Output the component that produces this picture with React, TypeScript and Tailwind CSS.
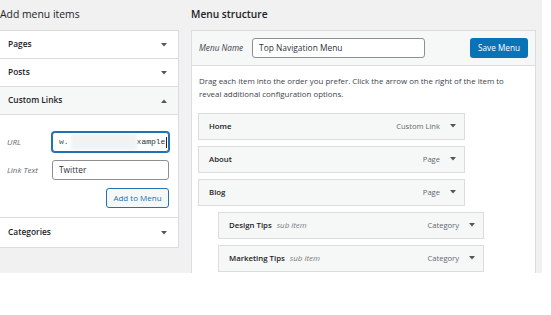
import React from 'react';

const font = { fontFamily: '"Open Sans", "Noto Sans", sans-serif' };

function Arrow({ up = false }: { up?: boolean }) {
  return (
    <svg width="6" height="4" viewBox="0 0 6 4" className="shrink-0">
      {up ? <path d="M0 4 L3 0.5 L6 4 Z" fill="#50575e" /> : <path d="M0 0 L6 0 L3 3.5 Z" fill="#50575e" />}
    </svg>
  );
}

function AccordionRow({ label, open = false }: { label: string; open?: boolean }) {
  return (
    <div
      className={`flex h-[28px] items-center justify-between border-b border-[#dcdcde] pl-[8px] pr-[11px] ${
        open ? 'bg-[#f6f7f7]' : 'bg-white'
      }`}
    >
      <span className="text-[8.4px] font-semibold text-[#1d2327]">{label}</span>
      <Arrow up={open} />
    </div>
  );
}

function MenuItem({ title, type, sub = false }: { title: string; type: string; sub?: boolean }) {
  return (
    <div
      className={`flex h-[27px] items-center justify-between border border-[#dcdcde] bg-[#f6f7f7] pl-[10px] pr-[8px] ${
        sub ? 'ml-[20px] w-[266px]' : 'w-[267px]'
      }`}
    >
      <div className="flex items-baseline gap-[5px]">
        <span className="text-[7.8px] font-semibold text-[#1d2327]">{title}</span>
        {sub && <span className="text-[7.9px] italic text-[#787c82]">sub item</span>}
      </div>
      <div className="flex items-center gap-[10px]">
        <span className="text-[7.6px] text-[#646970]">{type}</span>
        <Arrow />
      </div>
    </div>
  );
}

export default function App() {
  return (
    <div className="h-[315px] w-[551px] overflow-hidden bg-white" style={font}>
      <div className="flex h-[273px] w-[542px] gap-[12px] bg-[#f1f1f1]">
        {/* left column */}
        <div className="flex w-[179px] shrink-0 flex-col">
          <h2 className="flex h-[30px] items-center pb-[1px] text-[10.4px] text-[#1d2327]">Add menu items</h2>
          <div className="border-y border-r border-[#dcdcde] bg-white">
            <AccordionRow label="Pages" />
            <AccordionRow label="Posts" />
            <AccordionRow label="Custom Links" open />
            <div className="flex flex-col gap-[8px] border-b border-[#dcdcde] pb-[9px] pl-[7px] pr-[9px] pt-[17px]">
              <div className="flex items-center justify-between">
                <span className="text-[8px] italic text-[#646970]">URL</span>
                <div className="flex h-[20px] w-[117px] items-center overflow-hidden rounded-[3px] border border-[#2271b1] bg-white pl-[6px] shadow-[0_0_0_1px_#2271b1] [font-family:'Liberation_Mono',monospace]">
                  <span className="text-[8px] text-[#50575e]">w.</span>
                  <span className="ml-[2px] h-[16px] w-[66px] bg-[#f2f2f2] blur-[1.5px]" />
                  <span className="text-[8px] text-[#2c3338]">xample</span>
                  <span className="ml-[1px] h-[11px] w-px bg-[#1d2327]" />
                </div>
              </div>
              <div className="flex items-center justify-between">
                <span className="text-[8px] italic text-[#646970]">Link Text</span>
                <div className="flex h-[20px] w-[117px] items-center rounded-[3px] border border-[#8c8f94] bg-white pl-[6px]">
                  <span className="text-[8.4px] text-[#2c3338]">Twitter</span>
                </div>
              </div>
              <div className="flex justify-end">
                <button className="h-[20px] w-[63px] rounded-[3px] border border-[#2271b1] bg-[#f6f7f7] text-[8px] text-[#2271b1]">
                  Add to Menu
                </button>
              </div>
            </div>
            <div className="flex h-[29px] items-center justify-between pl-[8px] pr-[11px]">
              <span className="text-[8.4px] font-semibold text-[#1d2327]">Categories</span>
              <Arrow />
            </div>
          </div>
        </div>

        {/* right column */}
        <div className="flex w-[345px] shrink-0 flex-col">
          <h2 className="flex h-[30px] items-center pb-[1px] text-[10.2px] font-semibold text-[#1d2327]">Menu structure</h2>
          <div className="flex flex-1 flex-col overflow-hidden border-x border-t border-[#dcdcde] bg-white">
            <div className="flex h-[35px] shrink-0 items-center justify-between border-b border-[#dcdcde] bg-[#f6f7f7] pl-[7px] pr-[7px]">
              <div className="flex items-center gap-[9px]">
                <span className="text-[8.2px] italic text-[#3c434a]">Menu Name</span>
                <div className="flex h-[20px] w-[173px] items-center rounded-[3px] border border-[#8c8f94] bg-white pl-[6px]">
                  <span className="text-[8.4px] text-[#2c3338]">Top Navigation Menu</span>
                </div>
              </div>
              <button className="h-[20px] w-[58px] rounded-[3px] bg-[#0a72b7] text-[8.2px] text-white">Save Menu</button>
            </div>
            <p className="px-[7px] pt-[9px] text-[7.9px] leading-[13px] text-[#3c434a]">
              Drag each item into the order you prefer. Click the arrow on the right of the item to reveal additional
              configuration options.
            </p>
            <div className="flex flex-col gap-[6px] px-[6px] pt-[12px]">
              <MenuItem title="Home" type="Custom Link" />
              <MenuItem title="About" type="Page" />
              <MenuItem title="Blog" type="Page" />
              <MenuItem title="Design Tips" type="Category" sub />
              <MenuItem title="Marketing Tips" type="Category" sub />
            </div>
          </div>
        </div>
      </div>
    </div>
  );
}
